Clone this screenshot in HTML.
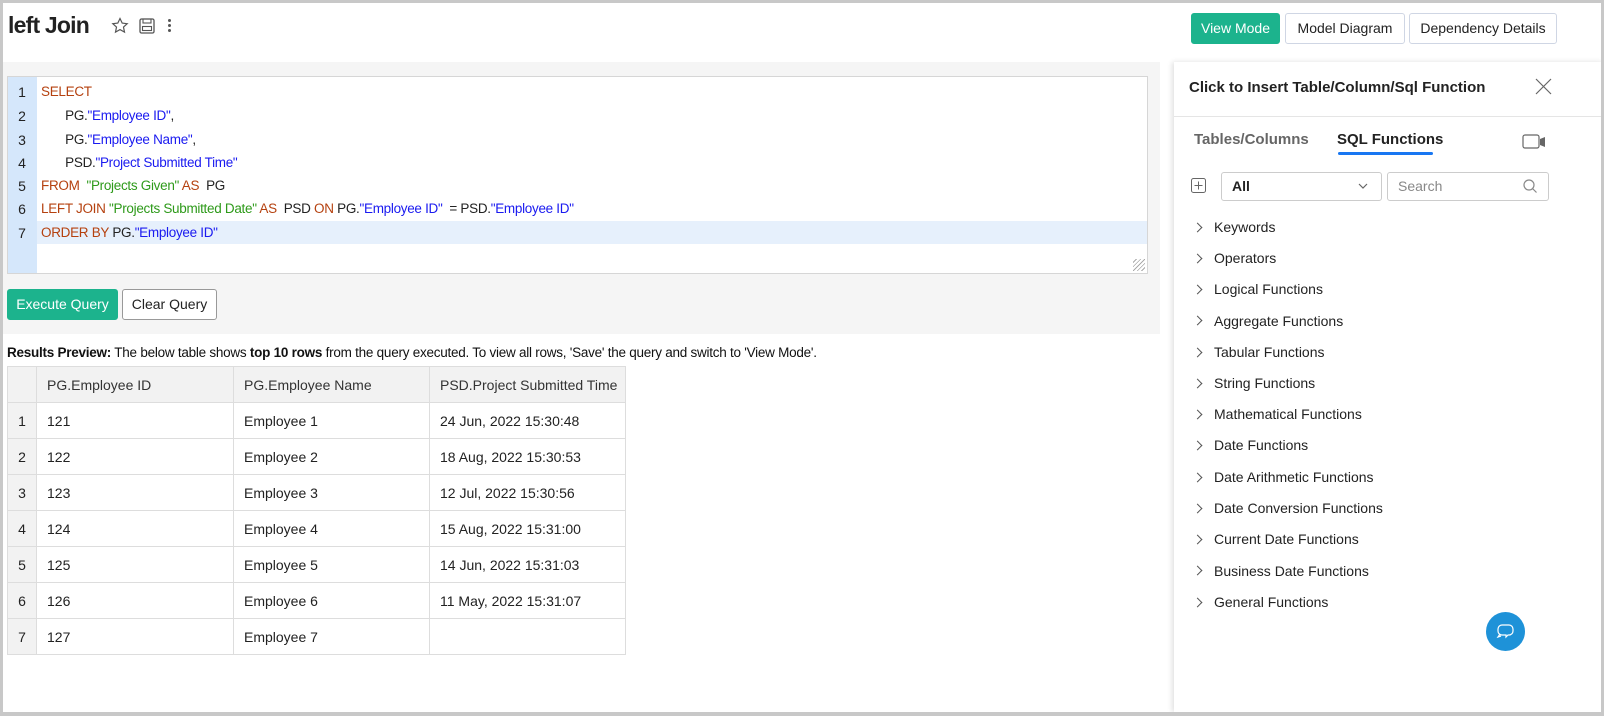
<!DOCTYPE html>
<html><head><meta charset="utf-8"><style>
*{box-sizing:border-box;margin:0;padding:0}
body{width:1604px;height:716px;overflow:hidden;background:#fff;font-family:"Liberation Sans",sans-serif;color:#222;position:relative}
.frame{position:absolute;left:0;top:0;width:1604px;height:716px;border:3px solid #c8c8c8;border-bottom-width:4px;pointer-events:none;z-index:9}
.abs{position:absolute}
h1{position:absolute;left:8px;top:12px;font-size:23px;font-weight:bold;color:#222;letter-spacing:-0.8px}
.btn{position:absolute;height:31px;border:1px solid #cfd6e4;border-radius:3px;font-size:14px;line-height:29px;text-align:center;background:#fff;color:#222}
.gbtn{background:#1cb38d;border-color:#1cb38d;color:#fff}
.code{position:absolute;left:41px;font-size:13.5px;letter-spacing:-0.3px;height:24px;line-height:24px;white-space:pre}
.ln{position:absolute;left:7px;width:30px;text-align:center;font-size:14px;line-height:24px;color:#222}
.k{color:#b5410f}.s{color:#1a1af0}.g{color:#2e9a1a}
table{position:absolute;left:7px;top:366px;border-collapse:collapse;font-size:14px}
td{border:1px solid #ddd;height:36px;padding-left:10px;color:#222}
tr.h td{background:#f2f2f2;color:#333}
td.n{background:#f2f2f2;padding-left:0;text-align:center;width:29px}
.item{position:absolute;left:1214px;font-size:14px;color:#222}
.chev{position:absolute;left:1194px;width:7px;height:7px;border-right:1.5px solid #555;border-top:1.5px solid #555;transform:rotate(45deg)}
</style></head><body>
<div class="frame"></div>
<h1>left Join</h1>
<svg class="abs" style="left:111px;top:17px" width="18" height="18" viewBox="0 0 18 18"><path d="M9 1.5l2.2 4.6 5 .6-3.7 3.4 1 5-4.5-2.5-4.5 2.5 1-5L1.8 6.7l5-.6z" fill="none" stroke="#555" stroke-width="1.2"/></svg>
<svg class="abs" style="left:138px;top:17px" width="18" height="18" viewBox="0 0 18 18"><rect x="2" y="2" width="14" height="14" rx="1.5" fill="none" stroke="#555" stroke-width="1.3"/><rect x="5" y="2" width="8" height="4" fill="none" stroke="#555" stroke-width="1.1"/><rect x="4.5" y="9.5" width="9" height="4" fill="none" stroke="#555" stroke-width="1.1"/></svg>
<div class="abs" style="left:168px;top:19px;width:3px;height:3px;background:#555;border-radius:50%;box-shadow:0 5px 0 #555,0 10px 0 #555"></div>

<div class="btn gbtn" style="left:1191px;top:13px;width:89px">View Mode</div>
<div class="btn" style="left:1285px;top:13px;width:120px">Model Diagram</div>
<div class="btn" style="left:1409px;top:13px;width:148px">Dependency Details</div>

<div class="abs" style="left:3px;top:62px;width:1157px;height:272px;background:#f5f5f5"></div>
<div class="abs" style="left:7px;top:76px;width:1141px;height:198px;background:#fff;border:1px solid #d6d6d6"></div>
<div class="abs" style="left:8px;top:77px;width:29px;height:196px;background:#d5e7fb"></div>
<div class="abs" style="left:37px;top:221px;width:1110px;height:23px;background:#e6f0fc"></div>
<div class="abs" style="left:1133px;top:259px;width:12px;height:12px;background:repeating-linear-gradient(135deg,#fff 0 2px,#aaa 2px 3px)"></div>
<div class="ln" style="top:80px">1</div><div class="ln" style="top:104px">2</div><div class="ln" style="top:128px">3</div><div class="ln" style="top:151px">4</div><div class="ln" style="top:174px">5</div><div class="ln" style="top:197px">6</div><div class="ln" style="top:221px">7</div>
<div class="code" style="top:80px"><span class="k">SELECT</span></div>
<div class="code" style="top:104px">       PG.<span class="s">"Employee ID"</span>,</div>
<div class="code" style="top:128px">       PG.<span class="s">"Employee Name"</span>,</div>
<div class="code" style="top:151px">       PSD.<span class="s">"Project Submitted Time"</span></div>
<div class="code" style="top:174px"><span class="k">FROM</span>  <span class="g">"Projects Given"</span> <span class="k">AS</span>  PG</div>
<div class="code" style="top:197px"><span class="k">LEFT JOIN</span> <span class="g">"Projects Submitted Date"</span> <span class="k">AS</span>  PSD <span class="k">ON</span> PG.<span class="s">"Employee ID"</span>  = PSD.<span class="s">"Employee ID"</span></div>
<div class="code" style="top:221px"><span class="k">ORDER BY</span> PG.<span class="s">"Employee ID"</span></div>

<div class="btn gbtn" style="left:7px;top:289px;width:111px;height:31px">Execute Query</div>
<div class="btn" style="left:122px;top:289px;width:95px;height:31px;border-color:#999">Clear Query</div>

<div class="abs" style="left:7px;top:345px;font-size:13.5px;letter-spacing:-0.25px;color:#111"><b>Results Preview:</b> The below table shows <b>top 10 rows</b> from the query executed. To view all rows, 'Save' the query and switch to 'View Mode'.</div>

<table>
<tr class="h"><td class="n"></td><td style="width:197px">PG.Employee ID</td><td style="width:196px">PG.Employee Name</td><td style="width:196px">PSD.Project Submitted Time</td></tr>
<tr><td class="n">1</td><td>121</td><td>Employee 1</td><td>24 Jun, 2022 15:30:48</td></tr>
<tr><td class="n">2</td><td>122</td><td>Employee 2</td><td>18 Aug, 2022 15:30:53</td></tr>
<tr><td class="n">3</td><td>123</td><td>Employee 3</td><td>12 Jul, 2022 15:30:56</td></tr>
<tr><td class="n">4</td><td>124</td><td>Employee 4</td><td>15 Aug, 2022 15:31:00</td></tr>
<tr><td class="n">5</td><td>125</td><td>Employee 5</td><td>14 Jun, 2022 15:31:03</td></tr>
<tr><td class="n">6</td><td>126</td><td>Employee 6</td><td>11 May, 2022 15:31:07</td></tr>
<tr><td class="n">7</td><td>127</td><td>Employee 7</td><td></td></tr>
</table>

<div class="abs" style="left:1174px;top:62px;width:430px;height:650px;background:#fff;box-shadow:-2px 0 5px rgba(0,0,0,0.12)"></div>
<div class="abs" style="left:1174px;top:116px;width:430px;height:1px;background:#e5e5e5"></div>
<div class="abs" style="left:1189px;top:79px;font-size:15px;font-weight:bold;color:#222">Click to Insert Table/Column/Sql Function</div>
<svg class="abs" style="left:1535px;top:78px" width="17" height="17"><path d="M1 1L16 16M16 1L1 16" stroke="#666" stroke-width="1.2"/></svg>
<div class="abs" style="left:1194px;top:131px;font-size:15px;font-weight:bold;color:#666">Tables/Columns</div>
<div class="abs" style="left:1337px;top:131px;font-size:15px;font-weight:bold;color:#222">SQL Functions</div>
<div class="abs" style="left:1338px;top:152px;width:95px;height:3px;background:#1877f2;border-radius:2px"></div>
<svg class="abs" style="left:1522px;top:133px" width="25" height="18"><rect x="1" y="2" width="16" height="13" rx="2" fill="none" stroke="#666" stroke-width="1.2"/><path d="M18 6l5-2v10l-5-2z" fill="#666"/></svg>
<svg class="abs" style="left:1191px;top:178px" width="15" height="15"><rect x="0.5" y="0.5" width="14" height="14" rx="2" fill="none" stroke="#666"/><path d="M7.5 3.5v8M3.5 7.5h8" stroke="#666"/></svg>
<div class="abs" style="left:1221px;top:172px;width:161px;height:29px;border:1px solid #ccc;border-radius:3px;font-size:14px;font-weight:bold;line-height:27px;padding-left:10px">All</div>
<svg class="abs" style="left:1358px;top:182px" width="10" height="8"><path d="M1 2l4 4 4-4" fill="none" stroke="#666" stroke-width="1.2"/></svg>
<div class="abs" style="left:1387px;top:172px;width:162px;height:29px;border:1px solid #ccc;border-radius:3px;font-size:14px;line-height:27px;padding-left:10px;color:#888">Search</div>
<svg class="abs" style="left:1523px;top:179px" width="15" height="15"><circle cx="6" cy="6" r="5" fill="none" stroke="#888" stroke-width="1.2"/><path d="M9.5 9.5l4 4" stroke="#888" stroke-width="1.2"/></svg>

<div class="chev" style="top:224px"></div><div class="item" style="top:219px">Keywords</div>
<div class="chev" style="top:255px"></div><div class="item" style="top:250px">Operators</div>
<div class="chev" style="top:286px"></div><div class="item" style="top:281px">Logical Functions</div>
<div class="chev" style="top:317px"></div><div class="item" style="top:313px">Aggregate Functions</div>
<div class="chev" style="top:349px"></div><div class="item" style="top:344px">Tabular Functions</div>
<div class="chev" style="top:380px"></div><div class="item" style="top:375px">String Functions</div>
<div class="chev" style="top:411px"></div><div class="item" style="top:406px">Mathematical Functions</div>
<div class="chev" style="top:442px"></div><div class="item" style="top:437px">Date Functions</div>
<div class="chev" style="top:474px"></div><div class="item" style="top:469px">Date Arithmetic Functions</div>
<div class="chev" style="top:505px"></div><div class="item" style="top:500px">Date Conversion Functions</div>
<div class="chev" style="top:536px"></div><div class="item" style="top:531px">Current Date Functions</div>
<div class="chev" style="top:567px"></div><div class="item" style="top:563px">Business Date Functions</div>
<div class="chev" style="top:599px"></div><div class="item" style="top:594px">General Functions</div>

<div class="abs" style="left:1486px;top:612px;width:39px;height:39px;border-radius:50%;background:#1e92d8"></div>
<svg class="abs" style="left:1494px;top:620px" width="23" height="23" viewBox="0 0 23 23"><path d="M8 5h7a4 4 0 0 1 4 4v2a4 4 0 0 1-4 4h-1l-2 2v-2H8a4 4 0 0 1-4-4V9a4 4 0 0 1 4-4z" fill="none" stroke="#fff" stroke-width="1.2"/><path d="M6 14l-2 3 3-1" fill="none" stroke="#fff" stroke-width="1.2"/></svg>
</body></html>
